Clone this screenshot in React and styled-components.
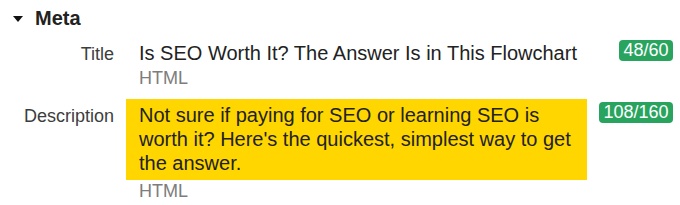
import React from "react";
import styled, { createGlobalStyle } from "styled-components";

const Global = createGlobalStyle`
  html, body { margin: 0; padding: 0; background: #fff; }
  body { font-family: "Liberation Sans", Arial, sans-serif; -webkit-font-smoothing: antialiased; }
`;

const Panel = styled.section`
  width: 680px;
  padding: 6px 8px 0 8px;
  box-sizing: border-box;
`;

const Heading = styled.h2`
  display: flex;
  align-items: center;
  gap: 12px;
  margin: 0 0 7px 0;
  padding-left: 5px;
  font-size: 20px;
  line-height: 24px;
  font-weight: 700;
  color: #222;
`;

const Caret = styled.span`
  width: 0;
  height: 0;
  margin-top: 1px;
  border-left: 5.5px solid transparent;
  border-right: 5.5px solid transparent;
  border-top: 6px solid #111;
`;

const Grid = styled.div`
  display: grid;
  grid-template-columns: 106px 461px 1fr;
  column-gap: 12px;
  row-gap: 10px;
`;

const Label = styled.div`
  text-align: right;
  font-size: 18px;
  line-height: 24px;
  padding-top: 5px;
  color: #3d3d3d;
`;

const Value = styled.div`
  display: flex;
  flex-direction: column;
`;

const Text = styled.div`
  padding: 4px 4px ${(p) => (p.$highlight ? "5px" : "2px")} 13px;
  font-size: 20px;
  line-height: 24px;
  color: #222;
  background: ${(p) => (p.$highlight ? "#ffd600" : "transparent")};
`;

const Source = styled.div`
  padding-left: 13px;
  font-size: 18px;
  line-height: 22px;
  color: #7d7d7d;
`;

const BadgeCell = styled.div`
  display: flex;
  justify-content: flex-end;
  align-items: flex-start;
  padding-top: 3px;
`;

const Badge = styled.span`
  display: inline-block;
  background: #28a45f;
  color: #fff;
  font-size: 18px;
  line-height: 21px;
  padding: 0 4.5px;
  border-radius: 4px;
`;

const rows = [
  {
    label: "Title",
    text: "Is SEO Worth It? The Answer Is in This Flowchart",
    source: "HTML",
    count: "48/60",
    highlight: false,
  },
  {
    label: "Description",
    text: "Not sure if paying for SEO or learning SEO is worth it? Here's the quickest, simplest way to get the answer.",
    source: "HTML",
    count: "108/160",
    highlight: true,
  },
];

export default function App() {
  return (
    <>
      <Global />
      <Panel>
        <Heading>
          <Caret />
          Meta
        </Heading>
        <Grid>
          {rows.map((r) => (
            <React.Fragment key={r.label}>
              <Label>{r.label}</Label>
              <Value>
                <Text $highlight={r.highlight}>{r.text}</Text>
                <Source>{r.source}</Source>
              </Value>
              <BadgeCell>
                <Badge>{r.count}</Badge>
              </BadgeCell>
            </React.Fragment>
          ))}
        </Grid>
      </Panel>
    </>
  );
}
